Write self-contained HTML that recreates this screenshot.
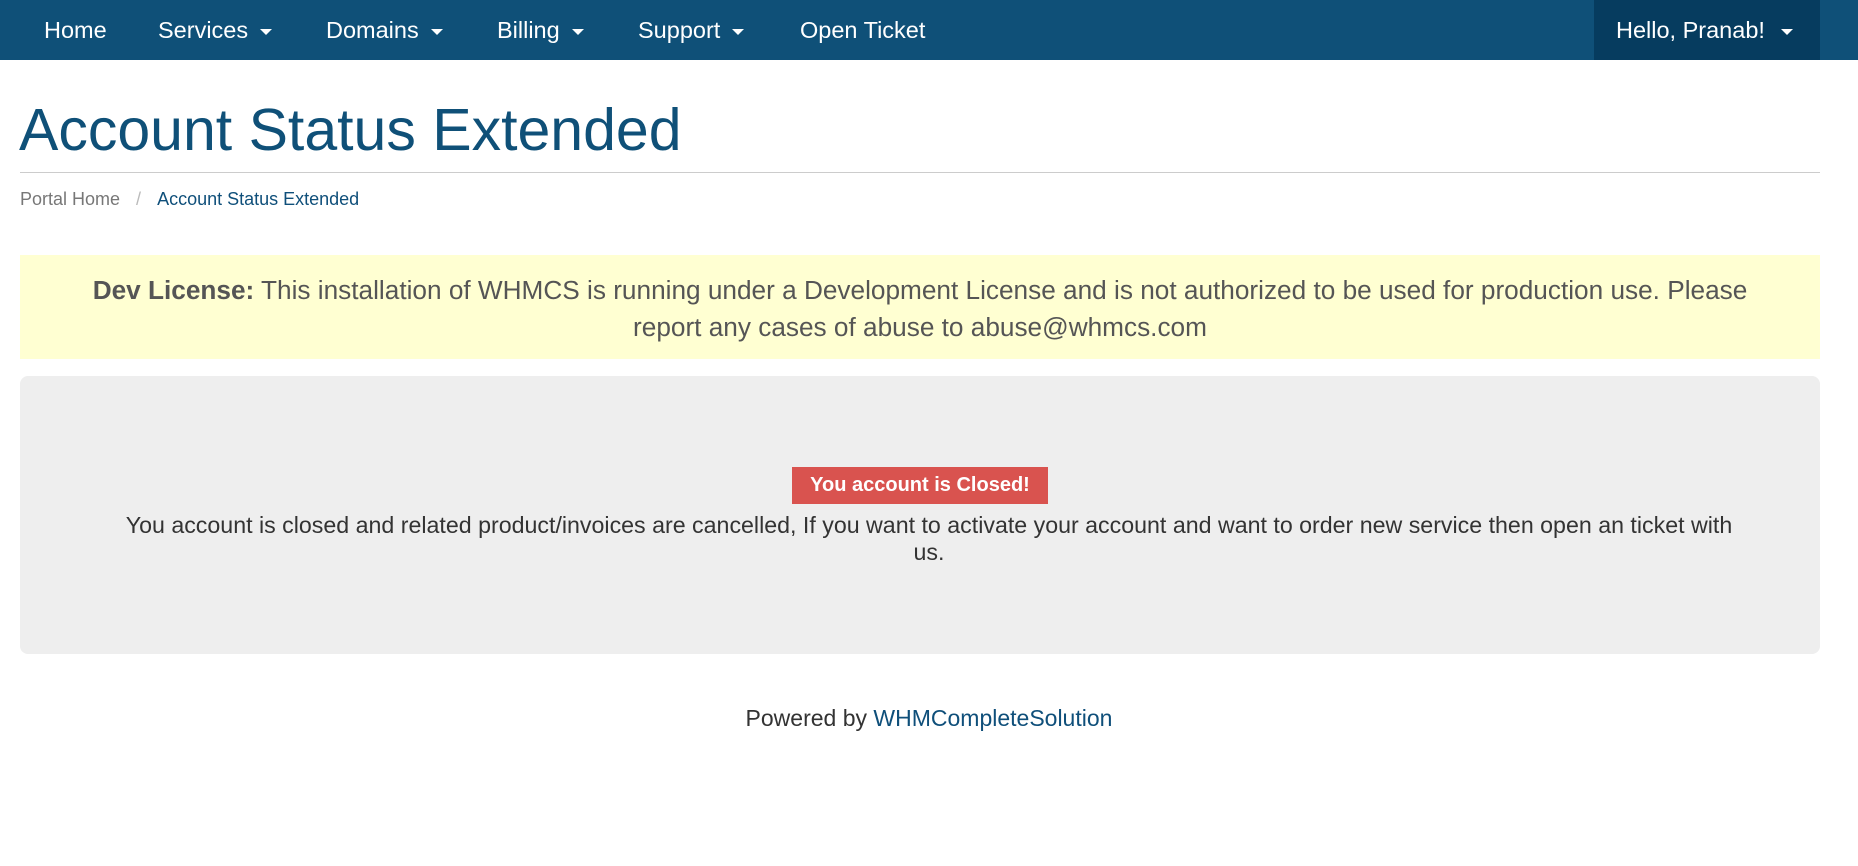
<!DOCTYPE html>
<html><head><meta charset="utf-8"><style>
*{margin:0;padding:0;box-sizing:border-box}
body{width:1858px;height:866px;background:#fff;font-family:"Liberation Sans",sans-serif;position:relative;overflow:hidden}
.nav{position:absolute;left:0;top:0;width:1858px;height:60px;background:#0f5078}
.nav span{position:absolute;top:0;line-height:60px;color:#fff;font-size:23.5px;white-space:nowrap}
.car{display:inline-block;width:0;height:0;border-left:6px solid transparent;border-right:6px solid transparent;border-top:6px solid #fff;vertical-align:middle;margin-left:12px}
.hello{position:absolute;left:1594px;top:0;width:226px;height:60px;background:#063c5f}
.abs{position:absolute;white-space:nowrap}
</style></head><body>
<div class="nav">
<span style="left:44px">Home</span>
<span style="left:158px">Services<i class="car"></i></span>
<span style="left:326px">Domains<i class="car"></i></span>
<span style="left:497px">Billing<i class="car"></i></span>
<span style="left:638px">Support<i class="car"></i></span>
<span style="left:800px">Open Ticket</span>
<div class="hello"></div>
<span style="left:1616px">Hello, Pranab!<i class="car" style="margin-left:16px"></i></span>
</div>
<div class="abs" style="left:19px;top:95px;font-size:59px;line-height:70px;color:#0f5078">Account Status Extended</div>
<div class="abs" style="left:20px;top:172px;width:1800px;height:1px;background:#ccc"></div>
<div class="abs" style="left:20px;top:188px;font-size:18px;line-height:22px;color:#777">Portal Home<span style="color:#bbb;margin:0 16px">/</span><span style="color:#0f4f7a">Account Status Extended</span></div>
<div class="abs" style="left:20px;top:255px;width:1800px;height:104px;background:#ffffd2;color:#555;font-size:26.2px;line-height:37px;text-align:center;white-space:normal;padding:17px 50px 0">
<b>Dev License:</b> This installation of WHMCS is running under a Development License and is not authorized to be used for production use. Please report any cases of abuse to abuse@whmcs.com</div>
<div class="abs" style="left:20px;top:376px;width:1800px;height:278px;background:#eee;border-radius:8px"></div>
<div class="abs" style="left:792px;top:467px;width:256px;height:37px;background:#d9534f;color:#fff;font-weight:bold;font-size:20px;line-height:37px;text-align:center">You account is Closed!</div>
<div class="abs" style="left:116px;top:512px;width:1626px;white-space:normal;text-align:center;color:#333;font-size:23.2px;line-height:27px">You account is closed and related product/invoices are cancelled, If you want to activate your account and want to order new service then open an ticket with us.</div>
<div class="abs" style="left:0;top:704px;width:1858px;text-align:center;font-size:23px;line-height:28px;color:#333">Powered by <span style="color:#0f4f7a">WHMCompleteSolution</span></div>
</body></html>
